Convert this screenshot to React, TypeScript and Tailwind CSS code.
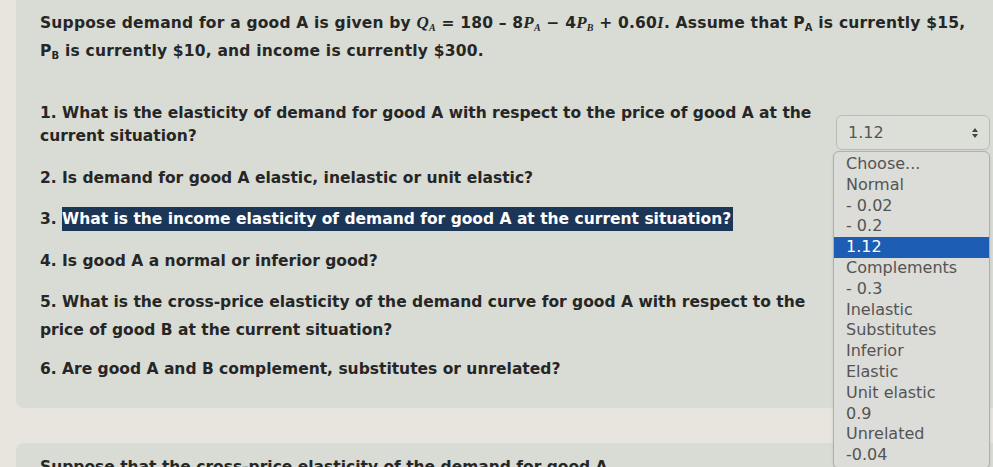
import React from 'react';

const options = [
  'Choose...',
  'Normal',
  '- 0.02',
  '- 0.2',
  '1.12',
  'Complements',
  '- 0.3',
  'Inelastic',
  'Substitutes',
  'Inferior',
  'Elastic',
  'Unit elastic',
  '0.9',
  'Unrelated',
  '-0.04',
];

const App: React.FC = () => {
  const selected = '1.12';

  return (
    <div className="w-[993px] h-[467px] overflow-hidden bg-[#e7e5dd] pl-[16px] font-['DejaVu_Sans',sans-serif] text-[#262626]">
      {/* question card */}
      <div className="h-[408px] bg-[#d8dcd5] rounded-bl-lg pl-[24px] pt-[9px]">
        <p className="text-[15.5px] font-bold leading-[28px] tracking-[0.2px]">
          Suppose demand for a good A is given by{' '}
          <i className="font-['Liberation_Serif',serif] text-[17px]">
            Q<sub className="text-[10px]">A</sub>
          </i>{' '}
          = 180 – 8<i className="font-['Liberation_Serif',serif] text-[17px]">P<sub className="text-[10px]">A</sub></i> − 4
          <i className="font-['Liberation_Serif',serif] text-[17px]">P<sub className="text-[10px]">B</sub></i> + 0.60
          <i className="font-['Liberation_Serif',serif] text-[17px]">I</i>. Assume that P<sub className="text-[10px]">A</sub> is
          currently $15,
          <br />
          P<sub className="text-[10px]">B</sub> is currently $10, and income is currently $300.
        </p>

        <div className="mt-[37px] flex flex-col text-[15.5px] font-bold">
          <div className="flex items-start">
            <p className="w-[790px] leading-[23px]">
              1. What is the elasticity of demand for good A with respect to the price of good A at the current
              situation?
            </p>
            <div className="relative ml-[6px] mt-[13px]">
              <div className="w-[154px] h-[35px] rounded-md border border-[#b9bcb5] bg-[#dcdfd8] flex items-center justify-between pl-[11px] pr-[10px] font-normal text-[16px] text-[#555]">
                <span>{selected}</span>
                <svg width="8" height="12" viewBox="0 0 8 12" className="text-[#444]">
                  <path d="M4 1 L7 5 H1 Z M4 11 L7 7 H1 Z" fill="currentColor" />
                </svg>
              </div>
              {/* open list */}
              <div className="absolute left-[-3px] top-[36px] w-[157px] rounded-md border border-[#aeb1aa] bg-[#dcdcd8] py-[2px] font-normal text-[16px] text-[#545454] shadow">
                {options.map((o, i) => (
                  <div
                    key={i}
                    className={`h-[20.8px] leading-[20.8px] pl-[12px] ${o === selected ? 'bg-[#1d5db3] text-white' : ''}`}
                  >
                    {o}
                  </div>
                ))}
              </div>
            </div>
          </div>

          <p className="mt-[17px] leading-[23px]">2. Is demand for good A elastic, inelastic or unit elastic?</p>

          <p className="mt-[18px] leading-[23px]">
            3.{' '}
            <span className="bg-[#1c3658] text-white py-[3px] pr-[2px]">
              What is the income elasticity of demand for good A at the current situation?
            </span>
          </p>

          <p className="mt-[19px] leading-[23px]">4. Is good A a normal or inferior good?</p>

          <p className="mt-[15px] w-[790px] leading-[28px]">
            5. What is the cross-price elasticity of the demand curve for good A with respect to the price of good B at
            the current situation?
          </p>

          <p className="mt-[14px] leading-[23px]">6. Are good A and B complement, substitutes or unrelated?</p>
        </div>
      </div>

      {/* next card */}
      <div className="mt-[35px] h-[60px] bg-[#d8dcd5] rounded-tl-lg pl-[24px] pt-[13px]">
        <p className="text-[15.5px] font-bold leading-[23px]">
          Suppose that the cross-price elasticity of the demand for good A
        </p>
      </div>
    </div>
  );
};

export default App;
